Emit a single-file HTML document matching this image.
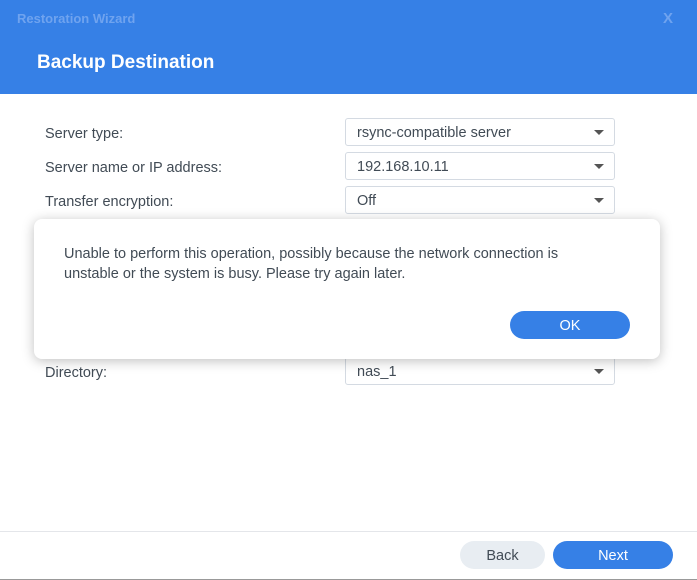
<!DOCTYPE html>
<html><head><style>
*{margin:0;padding:0;box-sizing:border-box}
body{width:697px;height:580px;background:#fff;font-family:"Liberation Sans",sans-serif;position:relative;overflow:hidden;color:#414b55}
.hdr{position:absolute;left:0;top:0;width:697px;height:94px;background:#3680e6}
.t1{position:absolute;left:17px;top:11px;font-size:13px;font-weight:bold;color:#6fa3ef}
.x{position:absolute;left:663px;top:10px;font-size:15px;font-weight:bold;color:#6fa3ef}
.t2{position:absolute;left:37px;top:52px;font-size:19px;font-weight:bold;color:#fff}
.lbl{position:absolute;left:45px;font-size:14.5px}
.fld{position:absolute;left:345px;width:270px;height:28px;border:1px solid #d4dae2;border-radius:3px;font-size:14.5px;padding:6px 11px}
.fld:after{content:"";position:absolute;right:10px;top:11px;border-left:5px solid transparent;border-right:5px solid transparent;border-top:5px solid #555}
.dlg{position:absolute;left:34px;top:219px;width:626px;height:140px;background:#fff;border-radius:8px;box-shadow:0 2px 12px rgba(0,0,0,.25)}
.msg{position:absolute;left:30px;top:25px;font-size:14.5px;line-height:20px;width:525px}
.btn{position:absolute;height:28px;border-radius:14px;font-size:14.5px;text-align:center;line-height:30px}
.blue{background:#3680e6;color:#fff}
.line{position:absolute;left:0;top:531px;width:697px;height:1px;background:#e4e6ea}
.bot{position:absolute;left:0;top:579px;width:697px;height:1px;background:#999}
</style></head><body>
<div class="hdr"><div class="t1">Restoration Wizard</div><div class="x">X</div><div class="t2">Backup Destination</div></div>
<div class="lbl" style="top:126px">Server type:</div><div class="fld" style="top:118px">rsync-compatible server</div>
<div class="lbl" style="top:160px">Server name or IP address:</div><div class="fld" style="top:152px">192.168.10.11</div>
<div class="lbl" style="top:194px">Transfer encryption:</div><div class="fld" style="top:186px">Off</div>
<div class="lbl" style="top:365px">Directory:</div><div class="fld" style="top:357px">nas_1</div>
<div class="dlg"><div class="msg">Unable to perform this operation, possibly because the network connection is<br>unstable or the system is busy. Please try again later.</div>
<div class="btn blue" style="left:476px;top:92px;width:120px">OK</div></div>
<div class="line"></div>
<div class="btn" style="left:460px;top:541px;width:85px;background:#e8edf2;color:#414b55">Back</div>
<div class="btn blue" style="left:553px;top:541px;width:120px">Next</div>
<div class="bot"></div>
</body></html>
